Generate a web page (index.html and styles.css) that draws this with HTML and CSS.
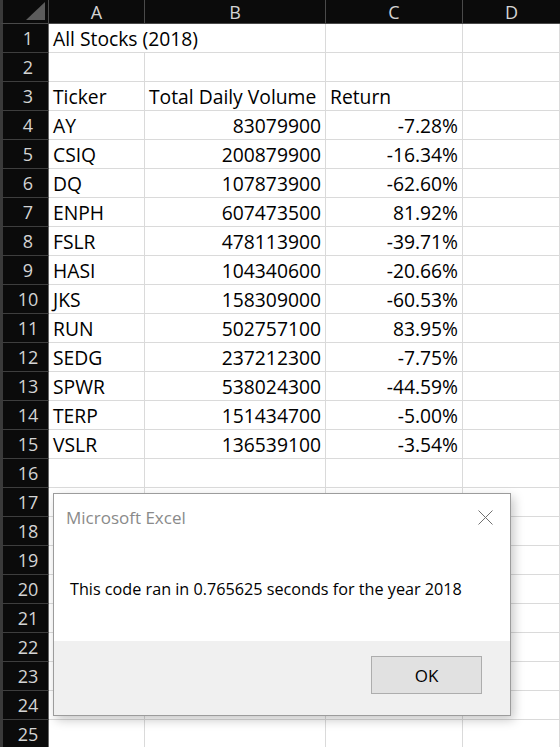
FILE: index.html
```html
<!DOCTYPE html>
<html>
<head>
<meta charset="utf-8">
<link rel="stylesheet" href="styles.css">
</head>
<body>
<div class="sheet">
  <div class="corner"><span class="tri"></span></div>
  <div class="colhead">A</div>
  <div class="colhead">B</div>
  <div class="colhead">C</div>
  <div class="colhead last">D</div>

  <div class="rowhead">1</div><div class="cell nob span">All Stocks (2018)</div><div class="cell"></div><div class="cell"></div><div class="cell"></div>
  <div class="rowhead">2</div><div class="cell"></div><div class="cell"></div><div class="cell"></div><div class="cell"></div>
  <div class="rowhead">3</div><div class="cell">Ticker</div><div class="cell">Total Daily Volume</div><div class="cell">Return</div><div class="cell"></div>
  <div class="rowhead">4</div><div class="cell">AY</div><div class="cell num">83079900</div><div class="cell num">-7.28%</div><div class="cell"></div>
  <div class="rowhead">5</div><div class="cell">CSIQ</div><div class="cell num">200879900</div><div class="cell num">-16.34%</div><div class="cell"></div>
  <div class="rowhead">6</div><div class="cell">DQ</div><div class="cell num">107873900</div><div class="cell num">-62.60%</div><div class="cell"></div>
  <div class="rowhead">7</div><div class="cell">ENPH</div><div class="cell num">607473500</div><div class="cell num">81.92%</div><div class="cell"></div>
  <div class="rowhead">8</div><div class="cell">FSLR</div><div class="cell num">478113900</div><div class="cell num">-39.71%</div><div class="cell"></div>
  <div class="rowhead">9</div><div class="cell">HASI</div><div class="cell num">104340600</div><div class="cell num">-20.66%</div><div class="cell"></div>
  <div class="rowhead">10</div><div class="cell">JKS</div><div class="cell num">158309000</div><div class="cell num">-60.53%</div><div class="cell"></div>
  <div class="rowhead">11</div><div class="cell">RUN</div><div class="cell num">502757100</div><div class="cell num">83.95%</div><div class="cell"></div>
  <div class="rowhead">12</div><div class="cell">SEDG</div><div class="cell num">237212300</div><div class="cell num">-7.75%</div><div class="cell"></div>
  <div class="rowhead">13</div><div class="cell">SPWR</div><div class="cell num">538024300</div><div class="cell num">-44.59%</div><div class="cell"></div>
  <div class="rowhead">14</div><div class="cell">TERP</div><div class="cell num">151434700</div><div class="cell num">-5.00%</div><div class="cell"></div>
  <div class="rowhead">15</div><div class="cell">VSLR</div><div class="cell num">136539100</div><div class="cell num">-3.54%</div><div class="cell"></div>
  <div class="rowhead">16</div><div class="cell"></div><div class="cell"></div><div class="cell"></div><div class="cell"></div>
  <div class="rowhead">17</div><div class="cell"></div><div class="cell"></div><div class="cell"></div><div class="cell"></div>
  <div class="rowhead">18</div><div class="cell"></div><div class="cell"></div><div class="cell"></div><div class="cell"></div>
  <div class="rowhead">19</div><div class="cell"></div><div class="cell"></div><div class="cell"></div><div class="cell"></div>
  <div class="rowhead">20</div><div class="cell"></div><div class="cell"></div><div class="cell"></div><div class="cell"></div>
  <div class="rowhead">21</div><div class="cell"></div><div class="cell"></div><div class="cell"></div><div class="cell"></div>
  <div class="rowhead">22</div><div class="cell"></div><div class="cell"></div><div class="cell"></div><div class="cell"></div>
  <div class="rowhead">23</div><div class="cell"></div><div class="cell"></div><div class="cell"></div><div class="cell"></div>
  <div class="rowhead">24</div><div class="cell"></div><div class="cell"></div><div class="cell"></div><div class="cell"></div>
  <div class="rowhead">25</div><div class="cell"></div><div class="cell"></div><div class="cell"></div><div class="cell"></div>
</div>

<div class="dialog">
  <div class="dlg-body">
    <div class="dlg-title">
      <span>Microsoft Excel</span>
      <svg class="close" width="15" height="15" viewBox="0 0 15 15"><path d="M0.5 0.5 L14.5 14.5 M14.5 0.5 L0.5 14.5" stroke="#707070" stroke-width="1" fill="none"/></svg>
    </div>
    <div class="dlg-msg">This code ran in 0.765625 seconds for the year 2018</div>
  </div>
  <div class="dlg-foot">
    <button class="ok">OK</button>
  </div>
</div>
</body>
</html>
```

FILE: styles.css
```css
html, body {
  margin: 0;
  padding: 0;
  background: #ffffff;
  overflow: hidden;
}
.sheet {
  display: grid;
  grid-template-columns: 49px 96px 181px 137px 97px;
  grid-template-rows: 24px repeat(25, 29px);
  width: 560px;
  font-family: "Open Sans", sans-serif;
}
.corner {
  background: #0b0b0b;
  position: relative;
  border-left: 3px solid #3a3a3a;
  border-right: 1px solid #4a4a4a;
  border-bottom: 1px solid #4a4a4a;
  box-sizing: border-box;
}
.tri {
  position: absolute;
  right: 3px;
  bottom: 3px;
  width: 0;
  height: 0;
  border-left: 19px solid transparent;
  border-bottom: 18px solid #5c5c5c;
}
.colhead {
  background: #0b0b0b;
  color: #d4d4d4;
  font-size: 18px;
  line-height: 25px;
  text-align: center;
  border-right: 1px solid #4a4a4a;
  border-bottom: 1px solid #4a4a4a;
  box-sizing: border-box;
}
.colhead.last { border-right: none; }
.rowhead {
  background: #0b0b0b;
  color: #d4d4d4;
  font-size: 18px;
  border-left: 3px solid #3a3a3a;
  border-right: 1px solid #6a6a6a;
  border-bottom: 1px solid #3e3e3e;
  box-sizing: border-box;
  display: flex;
  align-items: flex-end;
  justify-content: center;
  padding-left: 5px;
  padding-bottom: 2px;
  line-height: 24px;
}
.cell {
  border-right: 1px solid #dadada;
  border-bottom: 1px solid #dadada;
  box-sizing: border-box;
  font-size: 19.3px;
  color: #000;
  display: flex;
  align-items: flex-end;
  padding: 0 4px 0 4px;
  line-height: 26px;
  white-space: nowrap;
}
.cell.nob { border-right: none; }
.cell.span { overflow: visible; }
.cell.num { justify-content: flex-end; }

.dialog {
  position: absolute;
  left: 53px;
  top: 493px;
  width: 458px;
  height: 223px;
  box-sizing: border-box;
  border: 1px solid #9c9c9c;
  background: #ffffff;
  box-shadow: 3px 4px 10px rgba(0,0,0,0.22);
  display: flex;
  flex-direction: column;
  font-family: "Open Sans", sans-serif;
}
.dlg-body {
  flex: 1;
  background: #ffffff;
}
.dlg-title {
  display: flex;
  justify-content: space-between;
  align-items: center;
  padding: 8px 17px 0 12px;
  height: 30px;
  color: #8a8a8a;
  font-size: 17px;
}
.dlg-msg {
  padding: 46px 0 0 16px;
  font-size: 16.2px;
  color: #000;
}
.dlg-foot {
  height: 74px;
  background: #f0f0f0;
  display: flex;
  justify-content: flex-end;
  align-items: flex-start;
  padding: 15px 28px 0 0;
  box-sizing: border-box;
}
.ok {
  width: 111px;
  height: 38px;
  background: #e1e1e1;
  border: 1px solid #adadad;
  font-family: "Open Sans", sans-serif;
  font-size: 17px;
  color: #000;
  padding: 0;
}
```
